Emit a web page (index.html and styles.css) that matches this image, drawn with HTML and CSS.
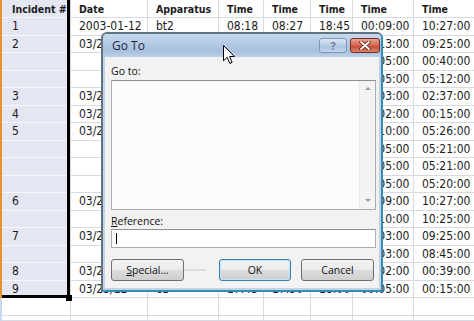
FILE: index.html
```html
<!DOCTYPE html>
<html>
<head>
<meta charset="utf-8">
<link rel="stylesheet" href="styles.css">
</head>
<body>
<div class="screen">
  <div class="sheet">
    <div class="rowheads"><div class="rh-sel"></div><div class="rh-rest"></div></div>
    <div class="grid">
      <div class="c a h">Incident #</div><div class="c h">Date</div><div class="c h">Apparatus</div><div class="c h">Time</div><div class="c h">Time</div><div class="c h">Time</div><div class="c h">Time</div><div class="c h">Time</div>

      <div class="c a">1</div><div class="c">2003-01-12</div><div class="c">bt2</div><div class="c">08:18</div><div class="c">08:27</div><div class="c">18:45</div><div class="c">00:09:00</div><div class="c">10:27:00</div>
      <div class="c a">2</div><div class="c">03/25/12</div><div class="c"></div><div class="c"></div><div class="c"></div><div class="c"></div><div class="c">00:13:00</div><div class="c">09:25:00</div>
      <div class="c a"></div><div class="c"></div><div class="c"></div><div class="c"></div><div class="c"></div><div class="c"></div><div class="c">00:05:00</div><div class="c">00:40:00</div>
      <div class="c a"></div><div class="c"></div><div class="c"></div><div class="c"></div><div class="c"></div><div class="c"></div><div class="c">00:05:00</div><div class="c">05:12:00</div>
      <div class="c a">3</div><div class="c">03/25/12</div><div class="c"></div><div class="c"></div><div class="c"></div><div class="c"></div><div class="c">00:03:00</div><div class="c">02:37:00</div>
      <div class="c a">4</div><div class="c">03/25/12</div><div class="c"></div><div class="c"></div><div class="c"></div><div class="c"></div><div class="c">00:02:00</div><div class="c">00:15:00</div>
      <div class="c a">5</div><div class="c">03/25/12</div><div class="c"></div><div class="c"></div><div class="c"></div><div class="c"></div><div class="c">00:10:00</div><div class="c">05:26:00</div>
      <div class="c a"></div><div class="c"></div><div class="c"></div><div class="c"></div><div class="c"></div><div class="c"></div><div class="c">00:05:00</div><div class="c">05:21:00</div>
      <div class="c a"></div><div class="c"></div><div class="c"></div><div class="c"></div><div class="c"></div><div class="c"></div><div class="c">00:05:00</div><div class="c">05:21:00</div>
      <div class="c a"></div><div class="c"></div><div class="c"></div><div class="c"></div><div class="c"></div><div class="c"></div><div class="c">00:05:00</div><div class="c">05:20:00</div>
      <div class="c a">6</div><div class="c">03/25/12</div><div class="c"></div><div class="c"></div><div class="c"></div><div class="c"></div><div class="c">00:09:00</div><div class="c">10:27:00</div>
      <div class="c a"></div><div class="c"></div><div class="c"></div><div class="c"></div><div class="c"></div><div class="c"></div><div class="c">00:10:00</div><div class="c">10:25:00</div>
      <div class="c a">7</div><div class="c">03/25/12</div><div class="c"></div><div class="c"></div><div class="c"></div><div class="c"></div><div class="c">00:03:00</div><div class="c">09:25:00</div>
      <div class="c a"></div><div class="c"></div><div class="c"></div><div class="c"></div><div class="c"></div><div class="c"></div><div class="c">00:03:00</div><div class="c">08:45:00</div>
      <div class="c a">8</div><div class="c">03/25/12</div><div class="c"></div><div class="c"></div><div class="c"></div><div class="c"></div><div class="c">00:02:00</div><div class="c">00:39:00</div>
      <div class="c a">9</div><div class="c">03/25/12</div><div class="c">c1</div><div class="c">17:45</div><div class="c">17:50</div><div class="c">18:00</div><div class="c">00:05:00</div><div class="c">00:15:00</div>

      <div class="c a free"></div><div class="c"></div><div class="c"></div><div class="c"></div><div class="c"></div><div class="c"></div><div class="c"></div><div class="c"></div>
      <div class="c a free"></div><div class="c"></div><div class="c"></div><div class="c"></div><div class="c"></div><div class="c"></div><div class="c"></div><div class="c"></div>
    </div>
  </div>

  <div class="selection"><span class="handle"></span></div>

  <div class="dialog">
    <div class="titlebar">
      <span class="title">Go To</span>
      <span class="capbtn help">?</span>
      <span class="capbtn close"><svg width="12" height="9" viewBox="0 0 12 9"><path d="M2 1 L10 8 M10 1 L2 8" stroke="#5a1a14" stroke-width="3.4" stroke-linecap="round"/><path d="M2 1 L10 8 M10 1 L2 8" stroke="#fff" stroke-width="1.8" stroke-linecap="round"/></svg></span>
    </div>
    <div class="body">
      <div class="label">Go to:</div>
      <div class="listbox">
        <div class="list-items"></div>
        <div class="vscroll">
          <span class="arrow up"></span>
          <span class="arrow down"></span>
        </div>
      </div>
      <div class="label label-ref"><u>R</u>eference:</div>
      <div class="input"><span class="caret"></span></div>
      <div class="buttons">
        <div class="btn"><u>S</u>pecial...</div>
        <div class="spacer"><span class="ghost"></span></div>
        <div class="btn default">OK</div>
        <div class="btn">Cancel</div>
      </div>
    </div>
  </div>

  <svg class="cursor" width="13" height="20" viewBox="0 0 13 20"><path d="M0.5 0.5 L0.5 15.8 L4.2 12.3 L6.8 18.4 L9.1 17.4 L6.6 11.5 L11.4 11.5 Z" fill="#fff" stroke="#000" stroke-width="1" stroke-linejoin="miter"/></svg>
</div>
</body>
</html>
```

FILE: styles.css
```css
* { box-sizing: border-box; }
html, body { margin: 0; padding: 0; }
body {
  width: 474px;
  height: 321px;
  overflow: hidden;
  background: #fff;
  font-family: "DejaVu Sans Condensed", "DejaVu Sans", sans-serif;
}
.screen {
  position: relative;
  width: 474px;
  height: 321px;
  overflow: hidden;
}

/* spreadsheet */
.sheet { display: flex; height: 100%; }
.rowheads { width: 2px; flex: none; display: flex; flex-direction: column; }
.rh-sel { height: 298px; background: #ec8f30; }
.rh-rest { flex: 1; background: #c9d9ee; }
.grid {
  display: grid;
  grid-template-columns: 69px 77px 71px 45px 47px 42px 61px 70px;
  grid-template-rows: 18px repeat(17, 17.5px);
  font-size: 12px;
  color: #1c1c1c;
}
.c {
  display: flex;
  align-items: center;
  padding-left: 8px;
  border-right: 1px solid #d6dae2;
  border-bottom: 1px solid #d6dae2;
  white-space: nowrap;
  overflow: hidden;
}
.h { font-weight: bold; font-size: 10.5px; }
.a {
  background: #e4e6f1;
  border-bottom-color: #f6f7fb;
  padding-left: 10px;
}
.a.free { background: #fff; border-bottom-color: #d6dae2; }

.selection {
  position: absolute;
  left: 2px;
  top: -3px;
  width: 68px;
  height: 301px;
  border: 3px solid #000;
  border-left: none;
}
.handle {
  position: absolute;
  right: -5px;
  bottom: -6px;
  width: 6px;
  height: 6px;
  background: #000;
}

/* dialog */
.dialog {
  position: absolute;
  left: 101px;
  top: 32px;
  width: 282px;
  height: 260px;
  border: 2px solid #5f7381;
  border-right-color: #2f8db6;
  border-bottom-color: #2f8db6;
  border-radius: 6px 6px 0 0;
  background: #c3d3e4;
  display: flex;
  flex-direction: column;
  font-family: "Open Sans", "Noto Sans", sans-serif;
  font-size: 10.5px;
  color: #111;
}
.titlebar {
  height: 23px;
  flex: none;
  display: flex;
  align-items: center;
  padding: 0 1px 0 9px;
  border-radius: 4px 4px 0 0;
  background: linear-gradient(#c7d8ec 0%, #afc6e1 55%, #a8c0de 75%, #bfd1e7 100%);
}
.title { flex: 1; font-size: 12px; color: #1d2b3b; }
.capbtn {
  height: 15px;
  border-radius: 3px;
  display: flex;
  align-items: center;
  justify-content: center;
}
.help {
  width: 28px;
  margin-right: 3px;
  border: 1px solid #7d98b5;
  background: linear-gradient(#dce8f5, #b9cde4 50%, #a9c1dd 51%, #c3d6ea);
  color: #6f7f90;
  font-size: 11px;
  font-weight: bold;
}
.close {
  width: 30px;
  border: 1px solid #7b2a22;
  background: linear-gradient(#e8a191, #d4674f 50%, #c44a33 51%, #d8826a);
}

.body {
  flex: 1;
  margin: 0 2px 2px;
  background: #f2f2f2;
  padding: 0 3px 0 6px;
  display: flex;
  flex-direction: column;
}
.label { height: 14px; line-height: 14px; margin-top: 7px; }
.label-ref { margin-top: 4px; }
.listbox {
  height: 130px;
  margin-top: 2px;
  border: 1px solid #abadb3;
  border-top-color: #8e8f8f;
  background: #fbfbfb;
  display: flex;
}
.list-items { flex: 1; }
.vscroll {
  width: 16px;
  background: #f3f3f3;
  border-left: 1px solid #ececec;
  display: flex;
  flex-direction: column;
  justify-content: space-between;
  align-items: center;
  padding: 6px 0 7px;
}
.arrow { width: 0; height: 0; border-left: 3px solid transparent; border-right: 3px solid transparent; }
.arrow.up { border-bottom: 3px solid #9a9a9a; }
.arrow.down { border-top: 3px solid #9a9a9a; }

.input {
  height: 19px;
  margin-top: 1px;
  border: 1px solid #abadb3;
  border-top-color: #8e8f8f;
  background: #fff;
  padding: 3px 0 0 4px;
}
.caret { display: block; width: 1px; height: 11px; background: #000; }

.buttons {
  display: flex;
  margin-top: 11px;
  margin-right: 2px;
  gap: 10px;
}
.spacer { flex: 1; display: flex; align-items: center; }
.ghost { display: block; width: 22px; height: 2px; background: #dcdcdc; margin-left: -10px; }
.btn {
  width: 73px;
  height: 22px;
  border: 1px solid #707070;
  border-radius: 3px;
  background: linear-gradient(#f3f3f3 0%, #ebebeb 48%, #dcdcdc 52%, #cfcfcf 100%);
  display: flex;
  align-items: center;
  justify-content: center;
  font-size: 10.5px;
}
.btn.default {
  width: 72px;
  border-color: #3c7fb1;
  box-shadow: inset 0 0 0 1px #bfe3f8;
}

.cursor {
  position: absolute;
  left: 223px;
  top: 45px;
}
```
